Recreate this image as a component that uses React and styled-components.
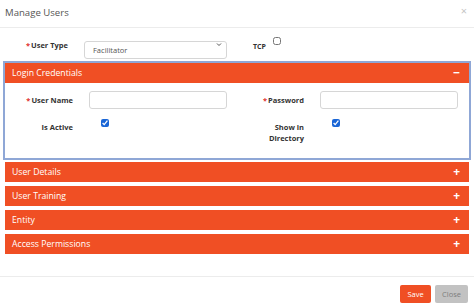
import styled, { createGlobalStyle } from "styled-components";

const GlobalStyle = createGlobalStyle`
  html, body {
    margin: 0;
    padding: 0;
    background: #fff;
  }
  * { box-sizing: border-box; }
`;

const ORANGE = "#f04f24";

const Modal = styled.div`
  width: 474px;
  height: 308px;
  display: flex;
  flex-direction: column;
  font-family: "Open Sans", "Liberation Sans", sans-serif;
  color: #333;
  background: #fff;
`;

const Header = styled.div`
  height: 28px;
  flex-shrink: 0;
  display: flex;
  align-items: center;
  justify-content: space-between;
  padding: 0 7px 0 5px;
  border-bottom: 1px solid #ececec;
`;

const Title = styled.div`
  font-size: 9.6px;
  color: #555;
  margin-top: -3px;
`;

const CloseX = styled.span`
  font-size: 11px;
  color: #c4c4c4;
  line-height: 1;
  margin-top: -6px;
`;

const Body = styled.div`
  flex: 1;
  padding: 8px 3px 0;
`;

const TopRow = styled.div`
  display: flex;
  align-items: center;
  height: 18px;
  margin-left: -3px;
`;

const Label = styled.label`
  width: ${p => p.$w || 68}px;
  flex-shrink: 0;
  text-align: right;
  font-size: 7.5px;
  font-weight: 700;
  line-height: 11px;
  color: #333;
  margin-right: ${p => p.$gap || 16}px;
  margin-top: ${p => p.$mt || 0}px;
  & b {
    color: #e0302c;
    font-weight: 700;
    margin-right: 1px;
  }
`;

const SelectWrap = styled.div`
  position: relative;
  width: 143px;
  height: 18px;
  & svg {
    position: absolute;
    right: 5px;
    top: 6px;
    pointer-events: none;
  }
`;

const Select = styled.select`
  appearance: none;
  width: 100%;
  height: 100%;
  border: 1px solid #d6d6d6;
  border-radius: 3px;
  background: #fff;
  font-family: inherit;
  font-size: 7.5px;
  color: #555;
  padding: 0 0 0 8px;
  outline: none;
`;

const TcpLabel = styled.span`
  font-size: 7px;
  font-weight: 700;
  color: #333;
  margin-left: 26px;
  margin-top: 2px;
`;

const Check = styled.input.attrs({ type: "checkbox" })`
  width: 8px;
  height: 8px;
  margin: ${p => p.$mt || 0}px 0 0 ${p => p.$ml || 0}px;
  accent-color: #1a66d6;
  align-self: flex-start;
`;

const Panel = styled.div`
  border: 2px solid ${p => (p.$open ? "#8fa7d6" : "transparent")};
  margin-top: ${p => p.$mt || 0}px;
`;

const PanelHeader = styled.div`
  height: 20px;
  background: ${ORANGE};
  color: #fff;
  display: flex;
  align-items: center;
  justify-content: space-between;
  padding: 0 9px 0 7px;
  font-size: 8.7px;
`;

const Sign = styled.span`
  font-size: 12px;
  font-weight: 700;
  line-height: 1;
`;

const PanelBody = styled.div`
  height: 75px;
  padding: 8px 0 0;
  display: flex;
  flex-direction: column;
  gap: 10px;
`;

const FieldRow = styled.div`
  display: flex;
`;

const Half = styled.div`
  width: 231px;
  display: flex;
  align-items: ${p => (p.$top ? "flex-start" : "center")};
`;

const TextInput = styled.input`
  width: 138px;
  height: 18px;
  border: 1px solid #d6d6d6;
  border-radius: 3px;
  outline: none;
`;

const Footer = styled.div`
  height: 32px;
  flex-shrink: 0;
  border-top: 1px solid #ececec;
  display: flex;
  justify-content: flex-end;
  align-items: flex-start;
  gap: 4px;
  padding: 8px 6px 0;
`;

const Button = styled.button`
  height: 18px;
  width: ${p => p.$w}px;
  padding: 0;
  border: none;
  border-radius: 2px;
  font-family: inherit;
  font-size: 7.5px;
  background: ${p => (p.$gray ? "#c2c2c2" : ORANGE)};
  color: ${p => (p.$gray ? "#7d7d7d" : "#fff")};
`;

const sections = ["User Details", "User Training", "Entity", "Access Permissions"];

const App = () => {
  return (
    <Modal>
      <GlobalStyle />
      <Header>
        <Title>Manage Users</Title>
        <CloseX>×</CloseX>
      </Header>
      <Body>
        <TopRow>
          <Label><b>*</b>User Type</Label>
          <SelectWrap>
            <Select defaultValue="Facilitator">
              <option>Facilitator</option>
            </Select>
            <svg width="6" height="5" viewBox="0 0 6 5">
              <path d="M1 1.5 L3 3.5 L5 1.5" fill="none" stroke="#555" strokeWidth="1" />
            </svg>
          </SelectWrap>
          <TcpLabel>TCP</TcpLabel>
          <Check $ml={7} $mt={1} />
        </TopRow>

        <Panel $open $mt={7}>
          <PanelHeader>
            Login Credentials
            <Sign>−</Sign>
          </PanelHeader>
          <PanelBody>
            <FieldRow>
              <Half>
                <Label><b>*</b>User Name</Label>
                <TextInput />
              </Half>
              <Half>
                <Label><b>*</b>Password</Label>
                <TextInput />
              </Half>
            </FieldRow>
            <FieldRow>
              <Half $top>
                <Label $gap={28} $mt={3}>Is Active</Label>
                <Check defaultChecked />
              </Half>
              <Half $top>
                <Label $gap={28} $mt={3}>Show in<br />Directory</Label>
                <Check defaultChecked />
              </Half>
            </FieldRow>
          </PanelBody>
        </Panel>

        {sections.map(s => (
          <Panel key={s}>
            <PanelHeader>
              {s}
              <Sign>+</Sign>
            </PanelHeader>
          </Panel>
        ))}
      </Body>
      <Footer>
        <Button $w={31}>Save</Button>
        <Button $gray $w={33}>Close</Button>
      </Footer>
    </Modal>
  );
};

export default App;
